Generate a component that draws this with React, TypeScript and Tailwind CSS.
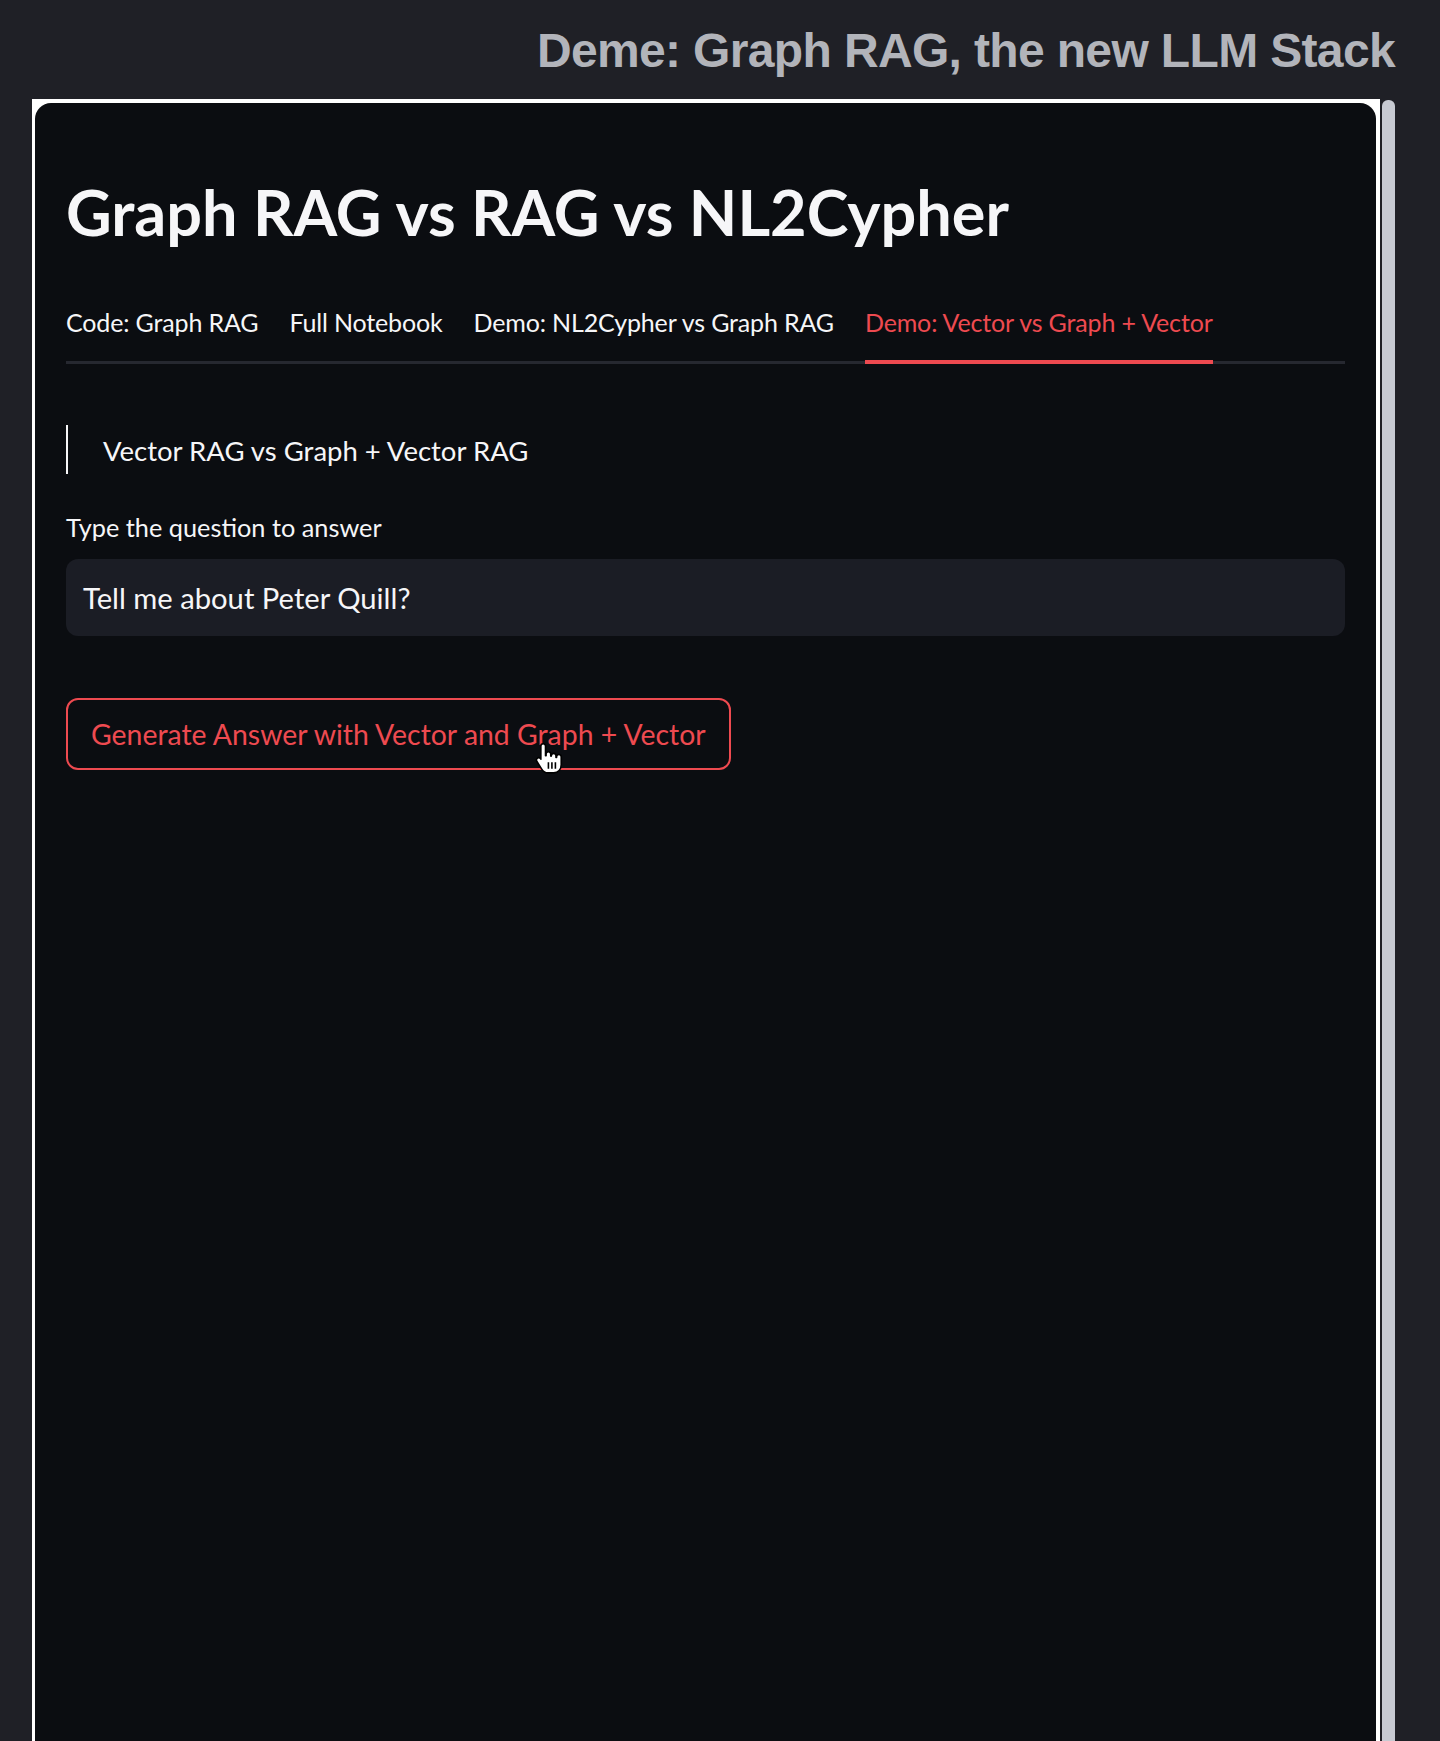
// Streamlit demo page: Graph RAG vs RAG vs NL2Cypher, vector tab active.
const tabs = [
  "Code: Graph RAG",
  "Full Notebook",
  "Demo: NL2Cypher vs Graph RAG",
  "Demo: Vector vs Graph + Vector",
];
const activeTab = 3;

function HandCursor() {
  return (
    <svg
      className="absolute left-[534px] top-[742px] pointer-events-none"
      width="30"
      height="32"
      viewBox="0 0 20 22"
    >
      <path
        d="M6 1.2c.9 0 1.6.7 1.6 1.6v6.6h.4V8.3c0-.9.7-1.6 1.6-1.6s1.6.7 1.6 1.6v1.4h.4V9.4c0-.9.7-1.6 1.6-1.6s1.6.7 1.6 1.6v1.2h.4v-.4c0-.9.7-1.6 1.6-1.6s1.6.7 1.6 1.6V15.6c0 3.2-2 5.6-5.2 5.6H9.2c-2 0-3.2-1-4.2-2.6L1.7 13.4c-.5-.8-.3-1.8.4-2.3.8-.5 1.7-.2 2.2.5l.1.2V2.8c0-.9.7-1.6 1.6-1.6z"
        fill="white"
        stroke="black"
        strokeWidth="1.1"
        strokeLinejoin="round"
      />
      <path d="M9.6 14v4.4M12 14v4.4M14.4 14v4.4" stroke="black" strokeWidth="1.1" />
    </svg>
  );
}

export default function App() {
  return (
    <div className="relative min-h-[1741px] flex flex-col bg-[#1f2026] overflow-hidden">
      {/* 상단 제목 */}
      <div className="h-[99px] flex justify-end pr-[45px] pt-[27px]">
        <h2 className="font-['Liberation_Sans',Arial,sans-serif] text-[48px] leading-none font-bold tracking-[-0.65px] text-[#b2b4ba]">
          Deme: Graph RAG, the new LLM Stack
        </h2>
      </div>

      {/* 앱 창 */}
      <div className="flex-1 flex items-stretch">
        <div className="ml-[32px] w-[1348px] bg-white pt-[4px] pl-[3px] pr-[4px] flex">
          <div className="flex-1 rounded-t-[16px] bg-[#0b0d11] px-[31px] font-[Lato,sans-serif] text-[#f6f6f8]">
            <h1 className="pt-[71px] text-[63px] leading-[1.2] font-bold">
              Graph RAG vs RAG vs NL2Cypher
            </h1>

            <div className="mt-[57px] flex gap-[31px] border-b-[3px] border-[#262830]">
              {tabs.map((t, i) => (
                <div
                  key={t}
                  className={[
                    "-mb-[3px] pb-[23px] border-b-4 text-[25px] tracking-[-0.15px] leading-[1.2] whitespace-nowrap",
                    i === activeTab ? "border-[#ee4a50] text-[#ee4a50]" : "border-transparent",
                  ].join(" ")}
                >
                  {t}
                </div>
              ))}
            </div>

            <div className="mt-[61px] border-l-2 border-[#f6f6f8] pt-[9px] pb-[7px] pl-[35px] text-[27.5px] leading-[1.2]">
              Vector RAG vs Graph + Vector RAG
            </div>

            <p className="mt-[38px] text-[25.3px] leading-[1.2]">Type the question to answer</p>
            <div className="mt-[17px] h-[77px] rounded-[12px] bg-[#1b1d25] px-[17px] flex items-center text-[29.2px]">
              Tell me about Peter Quill?
            </div>

            <button
              type="button"
              className="mt-[62px] h-[72px] rounded-[12px] border-2 border-[#ee4a50] px-[23px] text-[28.4px] text-[#ee4a50] leading-none"
            >
              Generate Answer with Vector and Graph + Vector
            </button>
          </div>
        </div>
        <div className="ml-[2px] mt-[1px] w-[13px] rounded-t-[6px] bg-[#c7cad2]" />
      </div>

      <HandCursor />
    </div>
  );
}
